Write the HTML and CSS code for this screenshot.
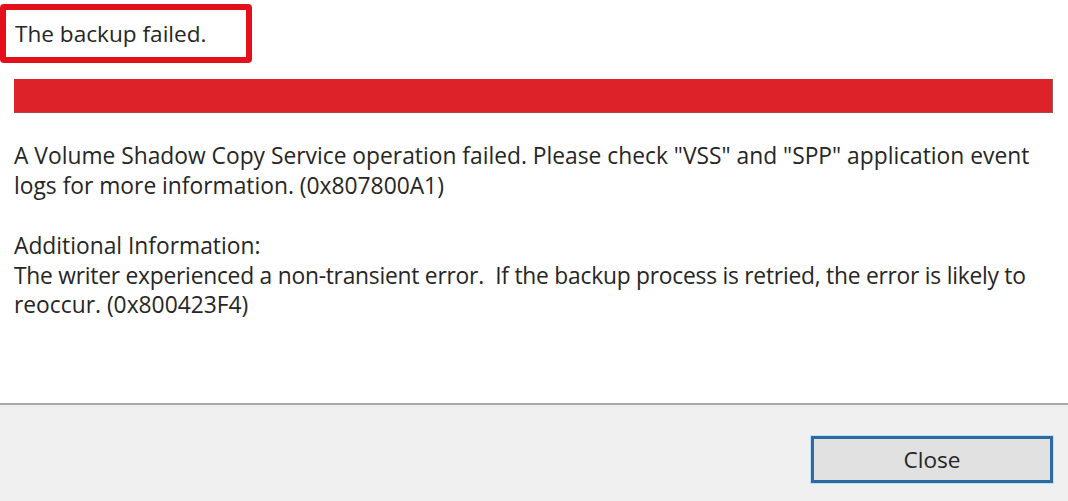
FILE: index.html
```html
<!DOCTYPE html>
<html>
<head>
<meta charset="utf-8">
<link rel="stylesheet" href="styles.css">
</head>
<body>
<div class="dialog">
  <div class="content">
    <div class="title-wrap">
      <div class="title">The backup failed.</div>
    </div>
    <div class="progress"></div>
    <p class="msg">A Volume Shadow Copy Service operation failed. Please check "VSS" and "SPP" application event<br>logs for more information. (0x807800A1)</p>
    <p class="msg">Additional Information:<br><span class="tight">The writer experienced a non-transient error.&nbsp; If the backup process is retried, the error is likely to</span><br>reoccur. (0x800423F4)</p>
  </div>
  <div class="footer">
    <button class="btn">Close</button>
  </div>
</div>
</body>
</html>
```
FILE: styles.css
```css
html, body {
  margin: 0;
  padding: 0;
  background: #ffffff;
}
.dialog {
  width: 1068px;
  height: 501px;
  display: flex;
  flex-direction: column;
  font-family: "Open Sans", "Noto Sans", sans-serif;
  color: #262626;
}
.content {
  height: 405px;
  padding: 4px 14px 0 14px;
  box-sizing: border-box;
  border-bottom: 2px solid #a9a9a9;
}
.title-wrap {
  margin-left: -14px;
  width: 252px;
  height: 59px;
  box-sizing: border-box;
  border: 6px solid #e3101b;
  border-radius: 4px;
  padding: 10px 0 0 9px;
}
.title {
  font-size: 22.6px;
  line-height: 28px;
}
.progress {
  margin-top: 16px;
  width: 1039px;
  height: 34px;
  box-sizing: border-box;
  background: #dd2229;
  border-right: 1px solid #9b5a5d;
  border-bottom: 1px solid #b0474b;
}
.msg {
  margin: 28px 0 0 0;
  font-size: 22.8px;
  line-height: 29.5px;
  white-space: nowrap;
}
.msg + .msg {
  margin-top: 31px;
}
.tight {
  letter-spacing: -0.24px;
}
.footer {
  flex: 1;
  background: #f0f0f0;
  display: flex;
  justify-content: flex-end;
  align-items: flex-start;
  padding: 31px 15px 0 0;
}
.btn {
  width: 242px;
  height: 47px;
  box-sizing: border-box;
  border: 3px solid #2d6a9f;
  background: #e1e1e1;
  box-shadow: 0 0 0 1px #bfe0f7;
  font-family: "Open Sans", "Noto Sans", sans-serif;
  font-size: 22.6px;
  color: #262626;
  padding: 0;
}
```
